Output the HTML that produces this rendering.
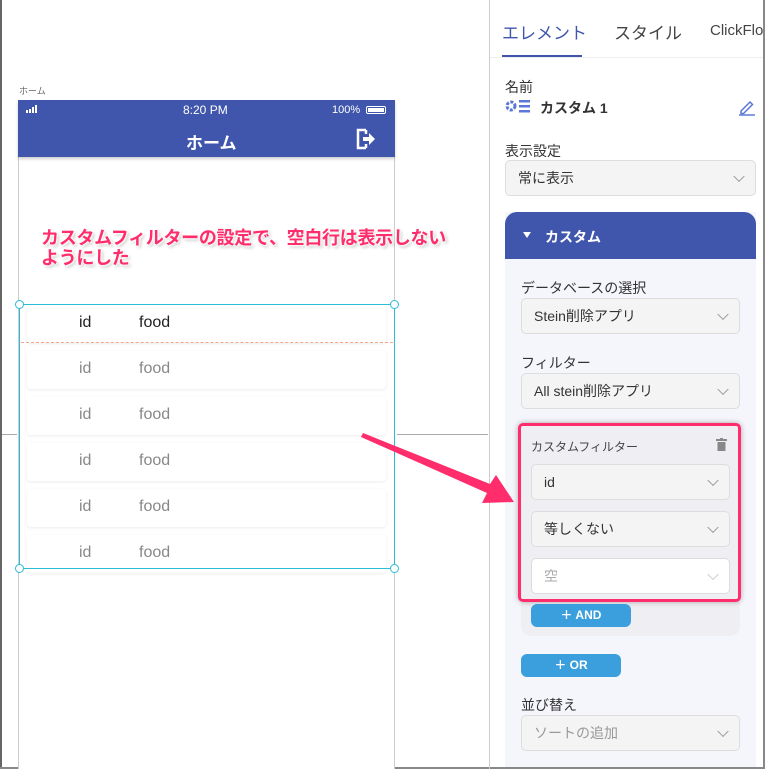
<!DOCTYPE html>
<html><head><meta charset="utf-8"><style>
*{box-sizing:border-box;margin:0;padding:0}
body{width:765px;height:769px;position:relative;overflow:hidden;background:#fff;font-family:"Liberation Sans","Noto Sans CJK JP",sans-serif;color:#333}
.a{position:absolute}
.row{position:absolute;left:27px;width:359px;height:38px;background:#fff;border-radius:4px;box-shadow:0 1px 3px rgba(0,0,0,.08);font-size:16px;color:#888}
.row span{position:absolute;top:9px}
.sel{position:absolute;border:1px solid #ddd;border-radius:5px;background:#f4f4f4;font-size:14px;color:#333;padding-left:12px}
.chev{position:absolute;right:12px;top:50%;width:8px;height:8px;border-right:1px solid #999;border-bottom:1px solid #999;transform:translateY(-70%) rotate(45deg)}
.lbl{position:absolute;font-size:14px;color:#333}
.btn{position:absolute;background:#3a9fdc;color:#fff;border-radius:6px;font-size:12px;font-weight:bold;text-align:center;line-height:23px}
</style></head><body>
<div class="a" style="left:0;top:0;width:2px;height:769px;background:#666"></div>
<div class="a" style="left:763px;top:0;width:2px;height:769px;background:#888"></div>
<div class="a" style="left:0;top:767px;width:765px;height:2px;background:#888"></div>
<div class="a" style="left:19px;top:84px;font-size:9px;color:#666">ホーム</div>
<!-- phone -->
<div class="a" style="left:18px;top:100px;width:377px;height:669px;border-left:1px solid #ccc;border-right:1px solid #ccc;background:#fff"></div>
<div class="a" style="left:18px;top:100px;width:377px;height:57px;background:#4056ad;color:#fff;box-shadow:0 2px 3px rgba(0,0,0,.2)">
 <div class="a" style="left:8px;top:5px;width:14px;height:8px">
  <div class="a" style="left:0;top:5px;width:2px;height:3px;background:#fff"></div><div class="a" style="left:3px;top:4px;width:2px;height:4px;background:#fff"></div><div class="a" style="left:6px;top:2px;width:2px;height:6px;background:#fff"></div><div class="a" style="left:9px;top:0;width:2px;height:8px;background:#fff"></div></div>
 <div class="a" style="left:165px;top:3px;font-size:12px">8:20 PM</div>
 <div class="a" style="left:314px;top:4px;font-size:11px">100%</div>
 <div class="a" style="left:348px;top:6px;width:20px;height:8px;border:1px solid #fff;border-radius:2px;padding:1px"><div style="width:100%;height:100%;background:#fff"></div></div>
 <div class="a" style="left:168px;top:29px;font-size:17px;font-weight:bold">ホーム</div>
 <svg class="a" style="left:338px;top:28px" width="20" height="22" viewBox="0 0 20 22"><path d="M10 2H2v18h8M10 2v4M10 20v-4" stroke="#fff" stroke-width="2.5" fill="none"/><path d="M7 9h6V5l6 6-6 6v-4H7z" fill="#fff"/></svg>
</div>
<div class="a" style="left:41px;top:228px;font-size:18px;font-weight:bold;color:#ff2d6b;line-height:20px;letter-spacing:-0.3px;white-space:nowrap;text-shadow:1px 1px 2px #fff,-1px -1px 2px #fff,0 0 3px #fff,2px 2px 3px rgba(0,0,0,.3)">カスタムフィルターの設定で、空白行は表示しない<br>ようにした</div>
<div class="row" style="top:305px;color:#222"><span style="left:52px">id</span><span style="left:112px">food</span></div>
<div class="a" style="left:21px;top:342px;width:372px;border-top:1px dashed #f6a58a"></div>
<div class="row" style="top:351px"><span style="left:52px">id</span><span style="left:112px">food</span></div>
<div class="row" style="top:397px"><span style="left:52px">id</span><span style="left:112px">food</span></div>
<div class="row" style="top:443px"><span style="left:52px">id</span><span style="left:112px">food</span></div>
<div class="row" style="top:489px"><span style="left:52px">id</span><span style="left:112px">food</span></div>
<div class="row" style="top:535px"><span style="left:52px">id</span><span style="left:112px">food</span></div>
<div class="a" style="left:19px;top:304px;width:376px;height:265px;border:1px solid #2bbcd8"></div>
<div class="a" style="left:15px;top:300px;width:9px;height:9px;border:1.5px solid #2bbcd8;border-radius:50%;background:#fff"></div>
<div class="a" style="left:390px;top:300px;width:9px;height:9px;border:1.5px solid #2bbcd8;border-radius:50%;background:#fff"></div>
<div class="a" style="left:15px;top:564px;width:9px;height:9px;border:1.5px solid #2bbcd8;border-radius:50%;background:#fff"></div>
<div class="a" style="left:390px;top:564px;width:9px;height:9px;border:1.5px solid #2bbcd8;border-radius:50%;background:#fff"></div>
<!-- panel -->
<div class="a" style="left:489px;top:0;width:1px;height:769px;background:#ccc"></div>
<div class="a" style="left:490px;top:0;width:273px;height:767px;background:#fff"></div>
<div class="a" style="left:502px;top:19px;font-size:17px;color:#4056ad">エレメント</div>
<div class="a" style="left:614px;top:19px;font-size:17px;color:#444">スタイル</div>
<div class="a" style="left:710px;top:22px;font-size:15px;color:#444;white-space:nowrap">ClickFlo</div>
<div class="a" style="left:502px;top:55px;width:80px;height:3px;background:#4056ad"></div>
<div class="a" style="left:490px;top:57px;width:273px;height:1px;background:#eee"></div>
<div class="lbl" style="left:505px;top:77px">名前</div>
<svg class="a" style="left:505px;top:98px" width="26" height="16"><circle cx="6" cy="8" r="4" fill="none" stroke="#5b78d8" stroke-width="3" stroke-dasharray="3 1.5"/><rect x="14" y="2" width="11" height="2.5" fill="#5b78d8"/><rect x="14" y="7" width="11" height="2.5" fill="#5b78d8"/><rect x="14" y="12" width="11" height="2.5" fill="#5b78d8"/></svg>
<div class="a" style="left:540px;top:98px;font-size:14px;font-weight:bold;color:#333">カスタム 1</div>
<svg class="a" style="left:738px;top:98px" width="18" height="18"><path d="M3 13l9-9 2.5 2.5-9 9H3z" fill="none" stroke="#5b78d8" stroke-width="1.5"/><path d="M1 17h16" stroke="#5b78d8" stroke-width="1.5"/></svg>
<div class="lbl" style="left:505px;top:141px">表示設定</div>
<div class="sel" style="left:505px;top:160px;width:251px;height:36px;line-height:34px">常に表示<i class="chev"></i></div>
<div class="a" style="left:505px;top:212px;width:251px;height:555px;background:#f5f5fc"></div>
<div class="a" style="left:505px;top:212px;width:251px;height:47px;background:#4056ad;border-radius:12px 12px 0 0;color:#fff;font-size:14px;font-weight:bold">
 <div class="a" style="left:18px;top:20px;width:0;height:0;border-left:4px solid transparent;border-right:4px solid transparent;border-top:6px solid #fff"></div>
 <div class="a" style="left:40px;top:15px">カスタム</div></div>
<div class="lbl" style="left:521px;top:278px">データベースの選択</div>
<div class="sel" style="left:521px;top:298px;width:219px;height:36px;line-height:34px">Stein削除アプリ<i class="chev"></i></div>
<div class="lbl" style="left:521px;top:353px">フィルター</div>
<div class="sel" style="left:521px;top:373px;width:219px;height:36px;line-height:34px">All stein削除アプリ<i class="chev"></i></div>
<div class="a" style="left:521px;top:422px;width:219px;height:214px;background:#efeff3;border-radius:10px"></div>
<div class="a" style="left:518px;top:423px;width:223px;height:179px;border:3px solid #ff2d6b;border-radius:5px;box-shadow:0 0 6px rgba(0,0,0,.3)"></div>
<div class="a" style="left:531px;top:438px;font-size:12px;color:#444">カスタムフィルター</div>
<svg class="a" style="left:716px;top:438px" width="11" height="13"><rect x="0" y="1" width="11" height="2" fill="#888"/><rect x="4" y="0" width="3" height="2" fill="#888"/><rect x="1.5" y="4" width="8" height="9" fill="#888"/></svg>
<div class="sel" style="left:531px;top:464px;width:199px;height:36px;line-height:34px">id<i class="chev"></i></div>
<div class="sel" style="left:531px;top:511px;width:199px;height:36px;line-height:34px">等しくない<i class="chev"></i></div>
<div class="sel" style="left:531px;top:558px;width:199px;height:36px;line-height:34px;background:#fff;color:#aaa">空<i class="chev" style="border-color:#ccc"></i></div>
<div class="btn" style="left:531px;top:604px;width:100px">＋ AND</div>
<div class="btn" style="left:521px;top:654px;width:100px">＋ OR</div>
<div class="lbl" style="left:521px;top:695px">並び替え</div>
<div class="sel" style="left:521px;top:715px;width:219px;height:36px;line-height:34px;color:#999">ソートの追加<i class="chev"></i></div>
<svg class="a" style="left:0;top:0" width="765" height="769">
<path d="M2 434.5H17M397 434.5H488" stroke="#aaa" stroke-width="1"/>
<polygon points="363,433 490,484 496,475 514,502 482,503 487,493 361,437" fill="#ff2d6b"/></svg>
</body></html>
